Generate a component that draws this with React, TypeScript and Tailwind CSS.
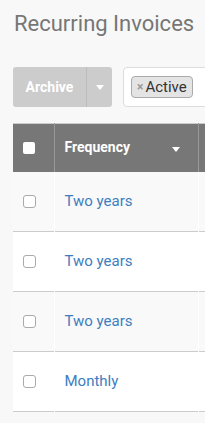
import { useState } from "react";

type Row = { id: number; frequency: string };

const rows: Row[] = [
  { id: 1, frequency: "Two years" },
  { id: 2, frequency: "Two years" },
  { id: 3, frequency: "Two years" },
  { id: 4, frequency: "Monthly" },
];

function Caret({ className }: { className?: string }) {
  return (
    <svg width="8" height="5" viewBox="0 0 8 5" className={className}>
      <path d="M0 0h8L4 5z" fill="currentColor" />
    </svg>
  );
}

export default function App() {
  const [checked, setChecked] = useState<number[]>([]);

  return (
    <div
      className="min-h-[423px] w-[205px] overflow-hidden bg-[#f8f8f8]"
      style={{ fontFamily: "Roboto, 'Liberation Sans', sans-serif" }}
    >
      <h1 className="whitespace-nowrap pl-[14px] pt-[10px] text-[22px] leading-[28px] text-[#767676]">
        Recurring Invoices
      </h1>

      <div className="mt-[29px] flex items-center pl-[13px]">
        <div className="flex h-[40px] w-[99px] shrink-0 rounded-[3px] bg-[#cccccc] text-white">
          <button className="w-[73px] text-[14px] font-bold">Archive</button>
          <div className="w-px bg-[#bcbcbc]" />
          <button className="flex flex-1 items-center justify-center">
            <Caret />
          </button>
        </div>
        <div className="ml-[11px] flex h-[40px] w-[120px] shrink-0 items-center rounded-[4px] border border-[#dddddd] bg-white pl-[7px]">
          <span className="flex h-[22px] items-center rounded-[4px] border border-[#aaaaaa] bg-[#e4e4e4] pl-[5px] pr-[5px] text-[15px] text-[#333]">
            <span className="mr-[2px] text-[12px] font-bold text-[#999]">×</span>
            Active
          </span>
        </div>
      </div>

      <div className="mt-[16px] pl-[13px]">
        <table className="w-[300px] table-fixed border-collapse">
          <colgroup>
            <col className="w-[41px]" />
            <col className="w-[144px]" />
            <col />
          </colgroup>
          <thead>
            <tr className="h-[48px] border-t border-[#cccccc] bg-[#777777] text-white">
              <th className="border-r border-[#999999] pl-[10px] text-left">
                <span className="block h-[12px] w-[12px] rounded-[2px] bg-white" />
              </th>
              <th className="border-r border-[#999999] pl-[10px] pr-[18px] text-left text-[14px] font-bold">
                <div className="flex items-center justify-between">
                  Frequency
                  <Caret className="mt-[4px]" />
                </div>
              </th>
              <th />
            </tr>
          </thead>
          <tbody>
            {rows.map((row, i) => (
              <tr
                key={row.id}
                className={`h-[60px] border-b border-[#cccccc] ${i % 2 === 0 ? "bg-[#f9f9f9]" : "bg-white"}`}
              >
                <td className="border-r border-white pl-[10px]">
                  <input
                    type="checkbox"
                    checked={checked.includes(row.id)}
                    onChange={() =>
                      setChecked((c) =>
                        c.includes(row.id) ? c.filter((x) => x !== row.id) : [...c, row.id],
                      )
                    }
                    className="block h-[13px] w-[13px] appearance-none rounded-[3px] border border-[#aaaaaa] bg-white"
                  />
                </td>
                <td className="border-r border-white pl-[10px] text-[15px] text-[#3d7ec0]">
                  {row.frequency}
                </td>
                <td />
              </tr>
            ))}
          </tbody>
        </table>
      </div>
    </div>
  );
}
